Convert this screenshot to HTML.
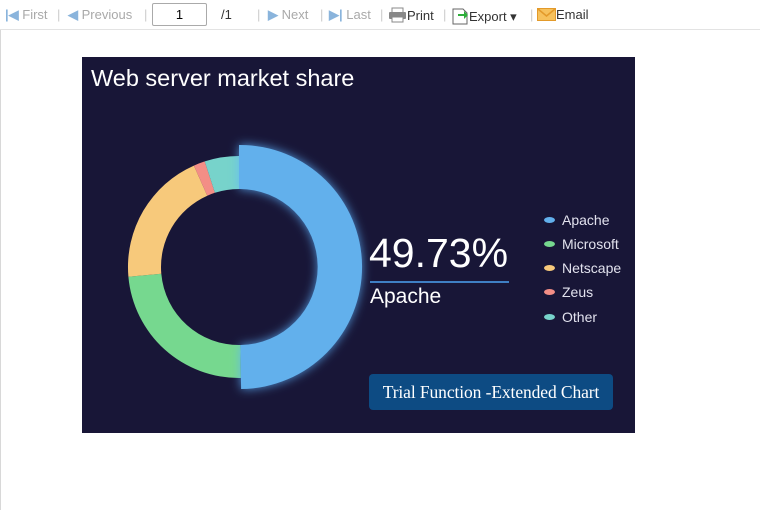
<!DOCTYPE html>
<html><head><meta charset="utf-8"><style>
body{margin:0;width:760px;height:510px;background:#fff;font-family:"Liberation Sans",Arial,sans-serif;position:relative;overflow:hidden}
.tb{position:absolute;left:0;top:0;width:760px;height:29px;border-bottom:1px solid #e3e3e3;font-size:13px;color:#a9a9a9}
.tb span{position:absolute;top:7px;white-space:nowrap}
.sep{color:#ccc}
.dk{color:#333}
.lb{position:absolute;left:0;top:30px;width:1px;height:480px;background:#d8d8d8}
.inp{position:absolute;left:152px;top:3px;width:53px;height:21px;border:1px solid #aaa;border-radius:2px;text-align:center;line-height:21px;color:#000;font-size:13px}
.chart{position:absolute;left:82px;top:57px;width:553px;height:376px;background:#181637}
.t{position:absolute;color:#fff;white-space:nowrap}
.lg{position:absolute;color:#e2e2ee;font-size:14px}
.lg i{display:inline-block;width:11px;height:6px;border-radius:50%;margin-right:7px;vertical-align:2px}
.btn{position:absolute;left:287px;top:317px;width:244px;height:36px;background:#0d4b83;border-radius:4px;color:#fff;font-family:"Liberation Serif",serif;font-size:17.5px;text-align:center;line-height:36px;letter-spacing:-0.1px}
</style></head><body>
<div class="tb">
<span style="left:5px"><b style="color:#8ab4dc">|◀</b> First</span>
<span class="sep" style="left:57px">|</span>
<span style="left:68px"><b style="color:#8ab4dc">◀</b> Previous</span>
<span class="sep" style="left:144px">|</span>
<span class="dk" style="left:221px">/1</span>
<span class="sep" style="left:257px">|</span>
<span style="left:268px"><b style="color:#8ab4dc">▶</b> Next</span>
<span class="sep" style="left:320px">|</span>
<span style="left:329px"><b style="color:#8ab4dc">▶|</b> Last</span>
<span class="sep" style="left:380px">|</span>
<span class="dk" style="left:388px"><svg width="19" height="16" style="vertical-align:-3px"><rect x="4" y="1" width="11" height="5" fill="#fff" stroke="#888"/><rect x="1" y="5" width="17" height="7" rx="1" fill="#888"/><rect x="4" y="10" width="11" height="5" fill="#fff" stroke="#888"/></svg>Print</span>
<span class="sep" style="left:443px">|</span>
<span class="dk" style="left:452px"><svg width="17" height="18" style="vertical-align:-4px"><path d="M1 2h10l4 4v11H1z" fill="#fff" stroke="#666"/><path d="M6 7h6V4l4 4-4 4V9H6z" fill="#2eae3a"/></svg>Export ▾</span>
<span class="sep" style="left:530px">|</span>
<span class="dk" style="left:537px"><svg width="19" height="14" style="vertical-align:-2px"><rect x="0.5" y="1.5" width="18" height="12" fill="#f6c15c" stroke="#e39a2a"/><path d="M1 2l8.5 7L18 2" fill="none" stroke="#e39a2a" stroke-width="1.5"/></svg>Email</span>
<div class="inp">1</div>
</div>
<div class="lb"></div>
<div class="chart">
<div class="t" style="left:9px;top:8px;font-size:23.5px">Web server market share</div>
<div class="t" style="left:287px;top:173px;font-size:41px">49.73%</div>
<div style="position:absolute;left:288px;top:224px;width:139px;height:2px;background:#3f7fc4"></div>
<div class="t" style="left:288px;top:228px;font-size:21px">Apache</div>
<div class="lg" style="left:462px;top:155px"><i style="background:#62b0ec"></i>Apache</div>
<div class="lg" style="left:462px;top:179px"><i style="background:#76d88f"></i>Microsoft</div>
<div class="lg" style="left:462px;top:203px"><i style="background:#f7c97b"></i>Netscape</div>
<div class="lg" style="left:462px;top:227px"><i style="background:#f38e86"></i>Zeus</div>
<div class="lg" style="left:462px;top:252px"><i style="background:#77d3cb"></i>Other</div>
<div class="btn">Trial Function -Extended Chart</div>
</div>
<svg width="760" height="510" style="position:absolute;left:0;top:0">
<defs><filter id="g" x="-50%" y="-50%" width="200%" height="200%"><feGaussianBlur stdDeviation="5" in="SourceAlpha" result="b"/><feFlood flood-color="#5fb4ff" flood-opacity="0.8"/><feComposite in2="b" operator="in"/><feMerge><feMergeNode/><feMergeNode in="SourceGraphic"/></feMerge></filter></defs>
<path d="M240.9 378A111 111 0 0 1 128.4 276.7L161.3 273.8A78 78 0 0 0 240.4 345Z" fill="#76d88f"/>
<path d="M128.4 276.7A111 111 0 0 1 193.9 165.6L207.3 195.7A78 78 0 0 0 161.3 273.8Z" fill="#f7c97b"/>
<path d="M193.9 165.6A111 111 0 0 1 204.7 161.4L214.9 192.8A78 78 0 0 0 207.3 195.7Z" fill="#f38e86"/>
<path d="M204.7 161.4A111 111 0 0 1 239 156L239 189A78 78 0 0 0 214.9 192.8Z" fill="#77d3cb"/>
<path d="M239 145A122 122 0 0 1 241.1 389L240.4 345A78 78 0 0 0 239 189Z" fill="#62b0ec" filter="url(#g)"/>
</svg>
</body></html>
